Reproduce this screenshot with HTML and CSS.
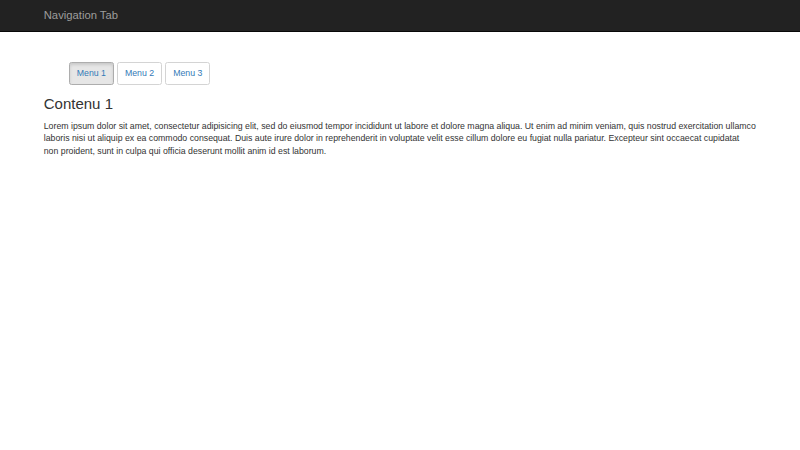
FILE: index.html
```html
<!DOCTYPE html>
<html lang="fr">
<head>
  <meta charset="UTF-8">
  <title>Navigation Tab</title>
  <link rel="stylesheet" href="styles.css">
</head>
<body>
  <nav class="navbar">
    <div class="container">
      <a class="navbar-brand" href="#">Navigation Tab</a>
    </div>
  </nav>

  <div class="container">
    <ul class="tabs">
      <li><a class="tab active" href="#menu1">Menu 1</a></li>
      <li><a class="tab" href="#menu2">Menu 2</a></li>
      <li><a class="tab" href="#menu3">Menu 3</a></li>
    </ul>

    <div class="tab-content">
      <h3>Contenu 1</h3>
      <p>Lorem ipsum dolor sit amet, consectetur adipisicing elit, sed do eiusmod tempor incididunt ut labore et dolore magna aliqua. Ut enim ad minim veniam, quis nostrud exercitation ullamco laboris nisi ut aliquip ex ea commodo consequat. Duis aute irure dolor in reprehenderit in voluptate velit esse cillum dolore eu fugiat nulla pariatur. Excepteur sint occaecat cupidatat non proident, sunt in culpa qui officia deserunt mollit anim id est laborum.</p>
    </div>
  </div>
</body>
</html>
```

FILE: styles.css
```css
/* Base styles */
body {
  margin: 0;
  font-family: "Liberation Sans", Arial, sans-serif;
  font-size: 8.75px;
  line-height: 12.5px;
  color: #333;
  background: #fff;
}

.container {
  width: 712.5px;
  padding: 0 43.75px;
}

/* Navbar */
.navbar {
  height: 31.5px;
  background-color: #222;
  border-bottom: 1px solid #080808;
  box-sizing: border-box;
}

.navbar-brand {
  display: block;
  line-height: 30.5px;
  font-size: 11.25px;
  color: #9d9d9d;
  text-decoration: none;
}

/* Tabs */
.tabs {
  display: flex;
  gap: 3px;
  list-style: none;
  margin: 30.5px 0 6.25px;
  padding-left: 25px;
}

.tab {
  display: block;
  padding: 4px 7px;
  line-height: 12.5px;
  color: #337ab7;
  text-decoration: none;
  background: #fff;
  border: 1px solid #d4d4d4;
  border-radius: 2.5px;
}

.tab.active {
  background-color: #e6e6e6;
  border-color: #adadad;
  box-shadow: inset 0 2px 3px rgba(0, 0, 0, 0.125);
}

/* Content */
.tab-content h3 {
  margin: 11.5px 0 7.25px;
  font-size: 15px;
  font-weight: 500;
  line-height: 16.5px;
}

.tab-content p {
  margin: 0 0 6.25px;
}
```
